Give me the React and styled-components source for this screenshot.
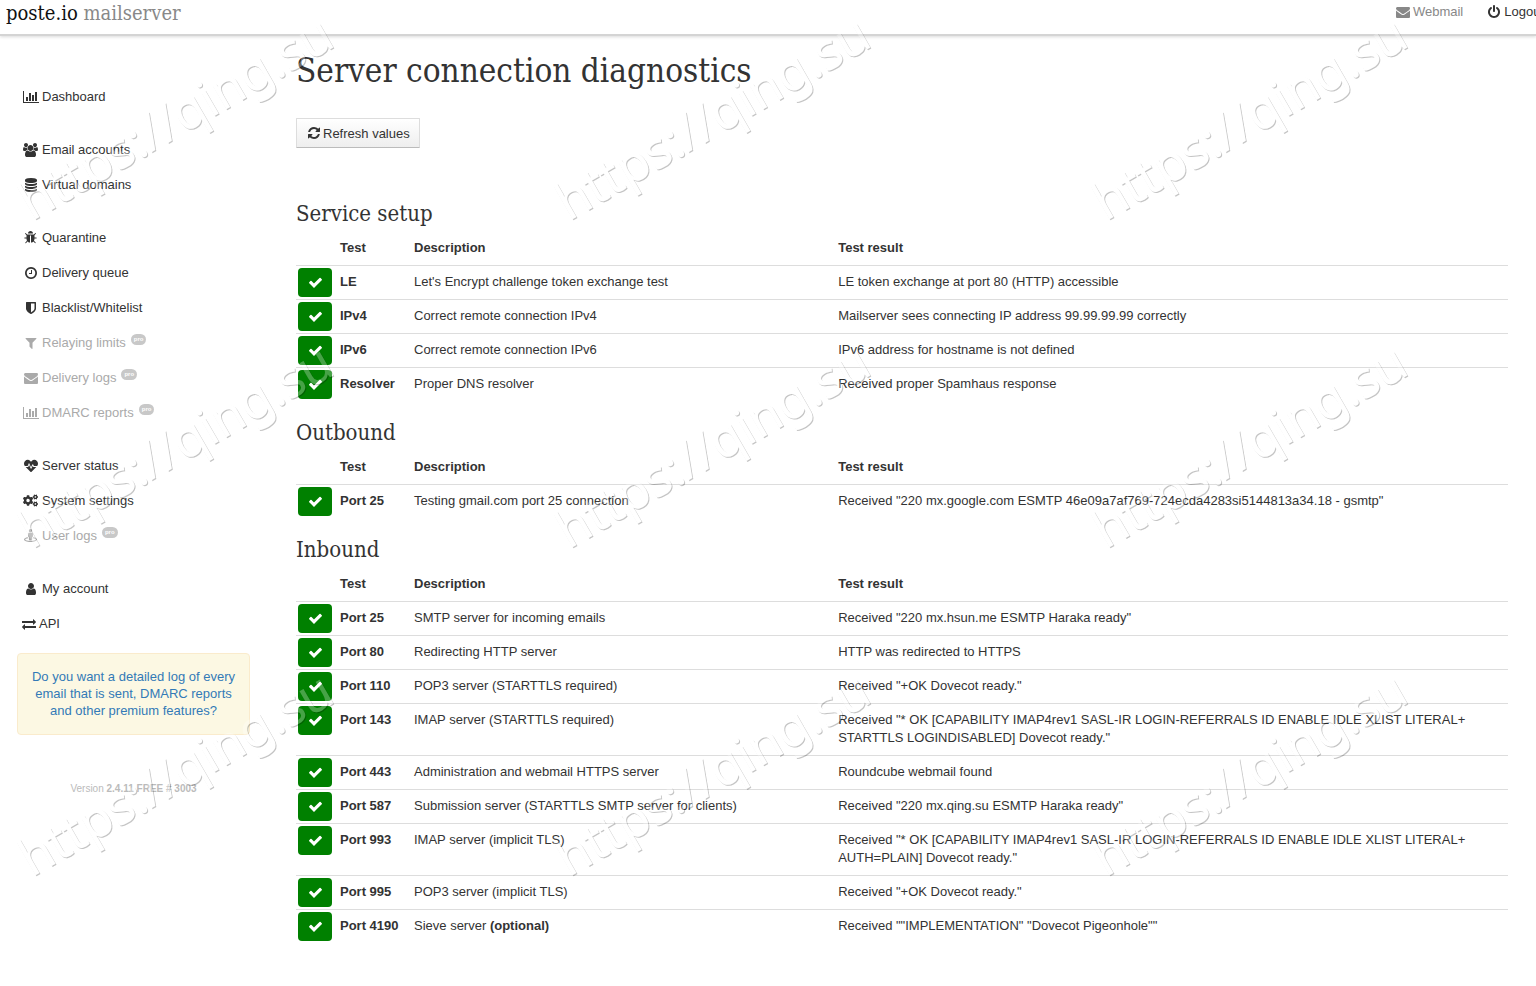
import React from "react"
import styled, { createGlobalStyle } from "styled-components"
import { FaCogs, FaHeartbeat, FaStreetView } from "react-icons/fa"

const colors = {
  text: "#333",
  black: "#111",
  grey: "#888",
  muted: "#aaa",
  badge: "#c8c8c8",
  line: "#ddd",
  ok: "#008000",
  link: "#337ab7",
  promo: "#fcf8e3",
  promoBorder: "#faebcc",
}

const fonts = {
  sans: `"Liberation Sans", Arial, sans-serif`,
  slab: `"Roboto Slab", "DejaVu Serif Condensed", "DejaVu Serif", serif`,
  watermark: `"Noto Sans", "Open Sans", sans-serif`,
}

const GlobalStyle = createGlobalStyle`
  * {
    box-sizing: border-box;
  }
  body {
    margin: 0;
    background: #fff;
    color: ${colors.text};
    font-family: ${fonts.sans};
    font-size: 13px;
    line-height: 18px;
  }
`

const paths = {
  chart: [
    2048,
    "M640 896v512h-256v-512h256zm384-512v1024h-256v-1024h256zm1024 1152v128h-2048v-1536h128v1408h1920zm-640-896v768h-256v-768h256zm384-384v1152h-256v-1152h256z",
  ],
  users: [
    1920,
    "M593 896q-162 5-265 128h-134q-82 0-138-40.5t-56-118.5q0-353 124-353 6 0 43.5 21t97.5 42.5 119 21.5q67 0 133-23-5 37-5 66 0 139 81 256zm1071 637q0 120-73 189.5t-194 69.5h-874q-121 0-194-69.5t-73-189.5q0-53 3.5-103.5t14-109 26.5-108.5 43-97.5 62-81 85.5-53.5 111.5-20q10 0 43 21.5t73 48 107 48 135 21.5 135-21.5 107-48 73-48 43-21.5q61 0 111.5 20t85.5 53.5 62 81 43 97.5 26.5 108.5 14 109 3.5 103.5zm-1024-1277q0 106-75 181t-181 75-181-75-75-181 75-181 181-75 181 75 75 181zm704 384q0 159-112.5 271.5t-271.5 112.5-271.5-112.5-112.5-271.5 112.5-271.5 271.5-112.5 271.5 112.5 112.5 271.5zm576 225q0 78-56 118.5t-138 40.5h-134q-103-123-265-128 81-117 81-256 0-29-5-66 66 23 133 23 59 0 119-21.5t97.5-42.5 43.5-21q124 0 124 353zm-128-609q0 106-75 181t-181 75-181-75-75-181 75-181 181-75 181 75 75 181z",
  ],
  database: [
    1792,
    "M896 768q237 0 443-43t325-127v170q0 69-103 128t-280 93.5-385 34.5-385-34.5-280-93.5-103-128v-170q119 84 325 127t443 43zm0 768q237 0 443-43t325-127v170q0 69-103 128t-280 93.5-385 34.5-385-34.5-280-93.5-103-128v-170q119 84 325 127t443 43zm0-384q237 0 443-43t325-127v170q0 69-103 128t-280 93.5-385 34.5-385-34.5-280-93.5-103-128v-170q119 84 325 127t443 43zm0-1152q208 0 385 34.5t280 93.5 103 128v128q0 69-103 128t-280 93.5-385 34.5-385-34.5-280-93.5-103-128v-128q0-69 103-128t280-93.5 385-34.5z",
  ],
  bug: [
    1664,
    "M1632 896q0 26-19 45t-45 19h-224q0 171-67 290l208 209q19 19 19 45t-19 45q-18 19-45 19t-45-19l-198-197q-5 5-15 13t-42 28.5-65 36.5-82 29-97 13v-896h-128v896q-51 0-101.5-13.5t-87-33-66-39-43.5-32.5l-15-14-183 207q-20 21-48 21-24 0-43-16-19-18-20.5-44.5t15.5-46.5l202-227q-58-114-58-274h-224q-26 0-45-19t-19-45 19-45 45-19h224v-294l-173-173q-19-19-19-45t19-45 45-19 45 19l173 173h844l173-173q19-19 45-19t45 19 19 45-19 45l-173 173v294h224q26 0 45 19t19 45zm-480-576h-640q0-133 93.5-226.5t226.5-93.5 226.5 93.5 93.5 226.5z",
  ],
  clock: [
    1792,
    "M1024 544v448q0 14-9 23t-23 9h-320q-14 0-23-9t-9-23v-64q0-14 9-23t23-9h224v-352q0-14 9-23t23-9h64q14 0 23 9t9 23zm416 352q0-148-73-273t-198-198-273-73-273 73-198 198-73 273 73 273 198 198 273 73 273-73 198-198 73-273zm224 0q0 209-103 385.5t-279.5 279.5-385.5 103-385.5-103-279.5-279.5-103-385.5 103-385.5 279.5-279.5 385.5-103 385.5 103 279.5 279.5 103 385.5z",
  ],
  shield: [
    1792,
    "M1344 960v-640h-448v1137q119-63 213-137 235-184 235-360zm192-768v768q0 86-33.5 170.5t-83 150-118 127.5-126.5 103-121 77.5-89.5 49.5-42.5 20q-12 6-26 6t-26-6q-16-7-42.5-20t-89.5-49.5-121-77.5-126.5-103-118-127.5-83-150-33.5-170.5v-768q0-26 19-45t45-19h1152q26 0 45 19t19 45z",
  ],
  filter: [
    1792,
    "M1595 295q17 41-14 70l-493 493v742q0 42-39 59-13 5-25 5-27 0-45-19l-256-256q-19-19-19-45v-486l-493-493q-31-29-14-70 17-39 59-39h1280q42 0 59 39z",
  ],
  envelope: [
    1792,
    "M1792 710v794q0 66-47 113t-113 47h-1472q-66 0-113-47t-47-113v-794q44 49 101 87 362 246 497 345 57 42 92.5 65.5t94.5 48 110 24.5h2q51 0 110-24.5t94.5-48 92.5-65.5q170-123 498-345 57-39 100-87zm0-294q0 79-49 151t-122 123q-376 261-468 325-10 7-42.5 31t-54 38.5-52 32.5-57.5 27-50 9h-2q-23 0-50-9t-57.5-27-52-32.5-54-38.5-42.5-31q-91-64-262-182.5t-205-142.5q-62-42-117-115.5t-55-136.5q0-78 41.5-130t118.5-52h1472q65 0 112.5 47t47.5 113z",
  ],
  user: [
    1792,
    "M1536 1399q0 109-62.5 187t-150.5 78h-854q-88 0-150.5-78t-62.5-187q0-85 8.5-160.5t31.5-152 58.5-131 94-89 134.5-34.5q131 128 313 128t313-128q76 0 134.5 34.5t94 89 58.5 131 31.5 152 8.5 160.5zm-256-887q0 159-112.5 271.5t-271.5 112.5-271.5-112.5-112.5-271.5 112.5-271.5 271.5-112.5 271.5 112.5 112.5 271.5z",
  ],
  exchange: [
    1792,
    "M1792 1184v192q0 13-9.5 22.5t-22.5 9.5h-1376v192q0 13-9.5 22.5t-22.5 9.5q-12 0-24-10l-319-320q-9-9-9-22 0-14 9-23l320-320q9-9 23-9 13 0 22.5 9.5t9.5 22.5v192h1376q13 0 22.5 9.5t9.5 22.5zm0-544q0 14-9 23l-320 320q-9 9-23 9-13 0-22.5-9.5t-9.5-22.5v-192h-1376q-13 0-22.5-9.5t-9.5-22.5v-192q0-13 9.5-22.5t22.5-9.5h1376v-192q0-14 9-23t23-9q12 0 24 10l319 319q9 9 9 23z",
  ],
  power: [
    1792,
    "M1664 896q0 156-61 298t-164 245-245 164-298 61-298-61-245-164-164-245-61-298q0-182 80.5-343t226.5-270q43-32 95.5-25t83.5 50q32 42 24.5 94.5t-49.5 84.5q-98 74-151.5 181t-53.5 228q0 104 40.5 198.5t109.5 163.5 163.5 109.5 198.5 40.5 198.5-40.5 163.5-109.5 109.5-163.5 40.5-198.5q0-121-53.5-228t-151.5-181q-42-32-49.5-84.5t24.5-94.5q31-43 84-50t95 25q146 109 226.5 270t80.5 343zm-640-768v640q0 52-38 90t-90 38-90-38-38-90v-640q0-52 38-90t90-38 90 38 38 90z",
  ],
  refresh: [
    1792,
    "M1639 1056q0 5-1 7-64 268-268 434.5t-478 166.5q-146 0-282.5-55t-243.5-157l-129 129q-19 19-45 19t-45-19-19-45v-448q0-26 19-45t45-19h448q26 0 45 19t19 45-19 45l-137 137q71 66 161 102t187 36q134 0 250-65t186-179q11-17 53-117 8-23 30-23h192q13 0 22.5 9.5t9.5 22.5zm25-800v448q0 26-19 45t-45 19h-448q-26 0-45-19t-19-45 19-45l138-138q-148-137-349-137-134 0-250 65t-186 179q-11 17-53 117-8 23-30 23h-199q-13 0-22.5-9.5t-9.5-22.5v-7q65-268 270-434.5t480-166.5q146 0 284 55.5t245 156.5l130-129q19-19 45-19t45 19 19 45z",
  ],
  check: [
    1792,
    "M1671 566q0 40-28 68l-724 724-136 136q-28 28-68 28t-68-28l-136-136-362-362q-28-28-28-68t28-68l136-136q28-28 68-28t68 28l294 295 656-657q28-28 68-28t68 28l136 136q28 28 28 68z",
  ],
}

const StyledSvg = styled.svg`
  display: block;
  flex: none;
  height: 14px;
  fill: currentColor;
`

const Icon = ({ name }) => {
  const [width, d] = paths[name]
  return (
    <StyledSvg viewBox={`0 0 ${width} 1792`} aria-hidden="true">
      <path d={d} />
    </StyledSvg>
  )
}

const StyledHeader = styled.header`
  display: flex;
  justify-content: space-between;
  height: 36px;
  padding: 0 0 0 6px;
  overflow: hidden;
  background: #fff;
  border-bottom: 2px solid #d4d4d4;
`

const HeaderShadow = styled.div`
  box-shadow: 0 1px 3px rgba(0, 0, 0, 0.15);
`

const StyledLogo = styled.a`
  color: ${colors.black};
  font-family: ${fonts.slab};
  font-size: 20px;
  line-height: 26px;
  text-decoration: none;
  white-space: nowrap;
  span {
    color: ${colors.grey};
  }
`

const TopNav = styled.nav`
  display: flex;
  gap: 24px;
  margin-right: -8px;
  padding-top: 3px;
`

const TopLink = styled.a`
  display: flex;
  align-items: center;
  gap: 3px;
  height: 18px;
  color: ${({ $active }) => ($active ? colors.grey : colors.text)};
  text-decoration: none;
`

const StyledPage = styled.div`
  display: flex;
  align-items: flex-start;
`

const StyledSidebar = styled.aside`
  flex: none;
  width: 250px;
  padding: 43px 0 0 17px;
`

const NavGroup = styled.ul`
  margin: 0 0 18px;
  padding: 0;
  list-style: none;
  &:last-of-type {
    margin-bottom: 12px;
  }
`

const SideLink = styled.a`
  display: flex;
  align-items: center;
  height: 35px;
  padding-left: 5px;
  color: ${({ $pro }) => ($pro ? colors.muted : colors.text)};
  text-decoration: none;
`

const IconSlot = styled.span`
  display: flex;
  flex: none;
  justify-content: center;
  width: ${({ $narrow }) => ($narrow ? "14px" : "17px")};
  margin-right: 3px;
  svg {
    flex: none;
  }
`

const ProBadge = styled.sup`
  align-self: flex-start;
  height: 11px;
  margin: 9px 0 0 5px;
  padding: 0 3px;
  border-radius: 6px;
  background: ${colors.badge};
  color: #fff;
  font-size: 6px;
  font-weight: bold;
  line-height: 11px;
`

const Promo = styled.a`
  display: block;
  padding: 14px 12px 15px;
  border: 1px solid ${colors.promoBorder};
  border-radius: 4px;
  background: ${colors.promo};
  color: ${colors.link};
  line-height: 17px;
  text-align: center;
  text-decoration: none;
`

const Version = styled.p`
  margin: 45px 0 0;
  color: #bbb;
  font-size: 10px;
  text-align: center;
`

const StyledMain = styled.main`
  flex: 1;
  min-width: 0;
  padding: 15px 28px 40px 46px;
`

const Title = styled.h1`
  margin: 0;
  font-family: ${fonts.slab};
  font-size: 33px;
  font-weight: normal;
  line-height: 40px;
`

const RefreshButton = styled.button`
  display: flex;
  align-items: center;
  gap: 2px;
  height: 30px;
  margin: 27px 0 52px;
  padding: 0 9px 0 10px;
  border: 1px solid #ddd;
  border-bottom-color: #bbb;
  border-radius: 1px;
  background: linear-gradient(#fff, #eee);
  color: ${colors.text};
  font-family: inherit;
  font-size: 13px;
`

const Section = styled.section`
  margin-bottom: 18px;
`

const SectionTitle = styled.h2`
  margin: 0 0 2px;
  font-family: ${fonts.slab};
  font-size: 22px;
  font-weight: normal;
  line-height: 28px;
`

const StyledTable = styled.table`
  width: 100%;
  border-collapse: collapse;
  table-layout: fixed;
  th,
  td {
    padding: 7px 5px 8px;
    text-align: left;
    vertical-align: top;
  }
  thead th {
    padding: 9px 5px 8px;
  }
  tbody tr {
    border-top: 1px solid ${colors.line};
  }
  tbody td:first-child {
    padding: 2px 2px 0;
  }
`

const Col = styled.col`
  width: ${({ $width }) => $width};
`

const Status = styled.span`
  display: flex;
  align-items: center;
  justify-content: center;
  width: 34px;
  height: 29px;
  border-radius: 4px;
  background: ${colors.ok};
  color: #fff;
  svg {
    height: 15px;
  }
`

const Watermark = styled.div`
  position: fixed;
  inset: 0;
  z-index: 10;
  display: grid;
  grid-template-columns: repeat(3, 348px);
  grid-auto-rows: 232px;
  align-content: start;
  gap: 96px 189px;
  overflow: hidden;
  filter: url(#emboss);
  pointer-events: none;
  user-select: none;
`

const WatermarkText = styled.span`
  place-self: center;
  color: #fff;
  font-family: ${fonts.watermark};
  font-size: 51px;
  line-height: 60px;
  white-space: nowrap;
  transform: rotate(-30deg);
`

const FilterDefs = styled.svg`
  display: block;
  width: 0;
  height: 0;
`

const navGroups = [
  [{ label: "Dashboard", icon: <Icon name="chart" /> }],
  [
    { label: "Email accounts", icon: <Icon name="users" /> },
    { label: "Virtual domains", icon: <Icon name="database" /> },
  ],
  [
    { label: "Quarantine", icon: <Icon name="bug" /> },
    { label: "Delivery queue", icon: <Icon name="clock" /> },
    { label: "Blacklist/Whitelist", icon: <Icon name="shield" /> },
    { label: "Relaying limits", icon: <Icon name="filter" />, pro: true },
    { label: "Delivery logs", icon: <Icon name="envelope" />, pro: true },
    { label: "DMARC reports", icon: <Icon name="chart" />, pro: true },
  ],
  [
    { label: "Server status", icon: <FaHeartbeat size={14} /> },
    { label: "System settings", icon: <FaCogs size={15} /> },
    { label: "User logs", icon: <FaStreetView size={13} />, pro: true },
  ],
  [
    { label: "My account", icon: <Icon name="user" /> },
    { label: "API", icon: <Icon name="exchange" />, narrow: true },
  ],
]

const sections = [
  {
    title: "Service setup",
    rows: [
      [
        "LE",
        "Let's Encrypt challenge token exchange test",
        "LE token exchange at port 80 (HTTP) accessible",
      ],
      [
        "IPv4",
        "Correct remote connection IPv4",
        "Mailserver sees connecting IP address 99.99.99.99 correctly",
      ],
      [
        "IPv6",
        "Correct remote connection IPv6",
        "IPv6 address for hostname is not defined",
      ],
      ["Resolver", "Proper DNS resolver", "Received proper Spamhaus response"],
    ],
  },
  {
    title: "Outbound",
    rows: [
      [
        "Port 25",
        "Testing gmail.com port 25 connection",
        'Received "220 mx.google.com ESMTP 46e09a7af769-724ecda4283si5144813a34.18 - gsmtp"',
      ],
    ],
  },
  {
    title: "Inbound",
    rows: [
      [
        "Port 25",
        "SMTP server for incoming emails",
        'Received "220 mx.hsun.me ESMTP Haraka ready"',
      ],
      ["Port 80", "Redirecting HTTP server", "HTTP was redirected to HTTPS"],
      [
        "Port 110",
        "POP3 server (STARTTLS required)",
        'Received "+OK Dovecot ready."',
      ],
      [
        "Port 143",
        "IMAP server (STARTTLS required)",
        'Received "* OK [CAPABILITY IMAP4rev1 SASL-IR LOGIN-REFERRALS ID ENABLE IDLE XLIST LITERAL+ STARTTLS LOGINDISABLED] Dovecot ready."',
      ],
      [
        "Port 443",
        "Administration and webmail HTTPS server",
        "Roundcube webmail found",
      ],
      [
        "Port 587",
        "Submission server (STARTTLS SMTP server for clients)",
        'Received "220 mx.qing.su ESMTP Haraka ready"',
      ],
      [
        "Port 993",
        "IMAP server (implicit TLS)",
        'Received "* OK [CAPABILITY IMAP4rev1 SASL-IR LOGIN-REFERRALS ID ENABLE IDLE XLIST LITERAL+ AUTH=PLAIN] Dovecot ready."',
      ],
      [
        "Port 995",
        "POP3 server (implicit TLS)",
        'Received "+OK Dovecot ready."',
      ],
      [
        "Port 4190",
        <>
          Sieve server <b>(optional)</b>
        </>,
        'Received ""IMPLEMENTATION" "Dovecot Pigeonhole""',
      ],
    ],
  },
]

const Header = () => (
  <HeaderShadow>
    <StyledHeader>
      <StyledLogo href="#home">
        poste.io <span>mailserver</span>
      </StyledLogo>
      <TopNav>
        <TopLink href="#webmail" $active>
          <Icon name="envelope" />
          Webmail
        </TopLink>
        <TopLink href="#logout">
          <Icon name="power" />
          Logout
        </TopLink>
      </TopNav>
    </StyledHeader>
  </HeaderShadow>
)

const Sidebar = () => (
  <StyledSidebar>
    <nav>
      {navGroups.map((items, i) => (
        <NavGroup key={i}>
          {items.map(({ label, icon, pro, narrow }) => (
            <li key={label}>
              <SideLink href="#" $pro={pro}>
                <IconSlot $narrow={narrow}>{icon}</IconSlot>
                {label}
                {pro && <ProBadge>pro</ProBadge>}
              </SideLink>
            </li>
          ))}
        </NavGroup>
      ))}
    </nav>
    <Promo href="#pro">
      Do you want a detailed log of every email that is sent, DMARC reports and
      other premium features?
    </Promo>
    <Version>
      Version <b>2.4.11 FREE # 3003</b>
    </Version>
  </StyledSidebar>
)

const TestTable = ({ title, rows }) => (
  <Section>
    <SectionTitle>{title}</SectionTitle>
    <StyledTable>
      <colgroup>
        <Col $width="39px" />
        <Col $width="74px" />
        <Col $width="35%" />
        <Col $width="auto" />
      </colgroup>
      <thead>
        <tr>
          <th aria-label="Status" />
          <th>Test</th>
          <th>Description</th>
          <th>Test result</th>
        </tr>
      </thead>
      <tbody>
        {rows.map(([test, description, result]) => (
          <tr key={test}>
            <td>
              <Status role="img" aria-label="OK">
                <Icon name="check" />
              </Status>
            </td>
            <th scope="row">{test}</th>
            <td>{description}</td>
            <td>{result}</td>
          </tr>
        ))}
      </tbody>
    </StyledTable>
  </Section>
)

const App = () => (
  <>
    <GlobalStyle />
    <Header />
    <StyledPage>
      <Sidebar />
      <StyledMain>
        <Title>Server connection diagnostics</Title>
        <RefreshButton type="button">
          <Icon name="refresh" />
          Refresh values
        </RefreshButton>
        {sections.map(section => (
          <TestTable key={section.title} {...section} />
        ))}
      </StyledMain>
    </StyledPage>
    <FilterDefs aria-hidden="true">
      <filter
        id="emboss"
        x="0"
        y="0"
        width="100%"
        height="100%"
        colorInterpolationFilters="sRGB"
      >
        <feGaussianBlur in="SourceAlpha" stdDeviation="0.7" result="blur" />
        <feOffset in="blur" dx="1" dy="1" result="shifted" />
        <feComposite in="shifted" in2="SourceAlpha" operator="out" result="edge" />
        <feFlood floodColor="#000" floodOpacity="0.23" />
        <feComposite in2="edge" operator="in" result="shade" />
        <feComponentTransfer in="SourceGraphic" result="face">
          <feFuncA type="linear" slope="0.28" />
        </feComponentTransfer>
        <feMerge>
          <feMergeNode in="shade" />
          <feMergeNode in="face" />
        </feMerge>
      </filter>
    </FilterDefs>
    <Watermark aria-hidden="true">
      {Array.from({ length: 9 }, (_, i) => (
        <WatermarkText key={i}>https://qing.su</WatermarkText>
      ))}
    </Watermark>
  </>
)

export default App
